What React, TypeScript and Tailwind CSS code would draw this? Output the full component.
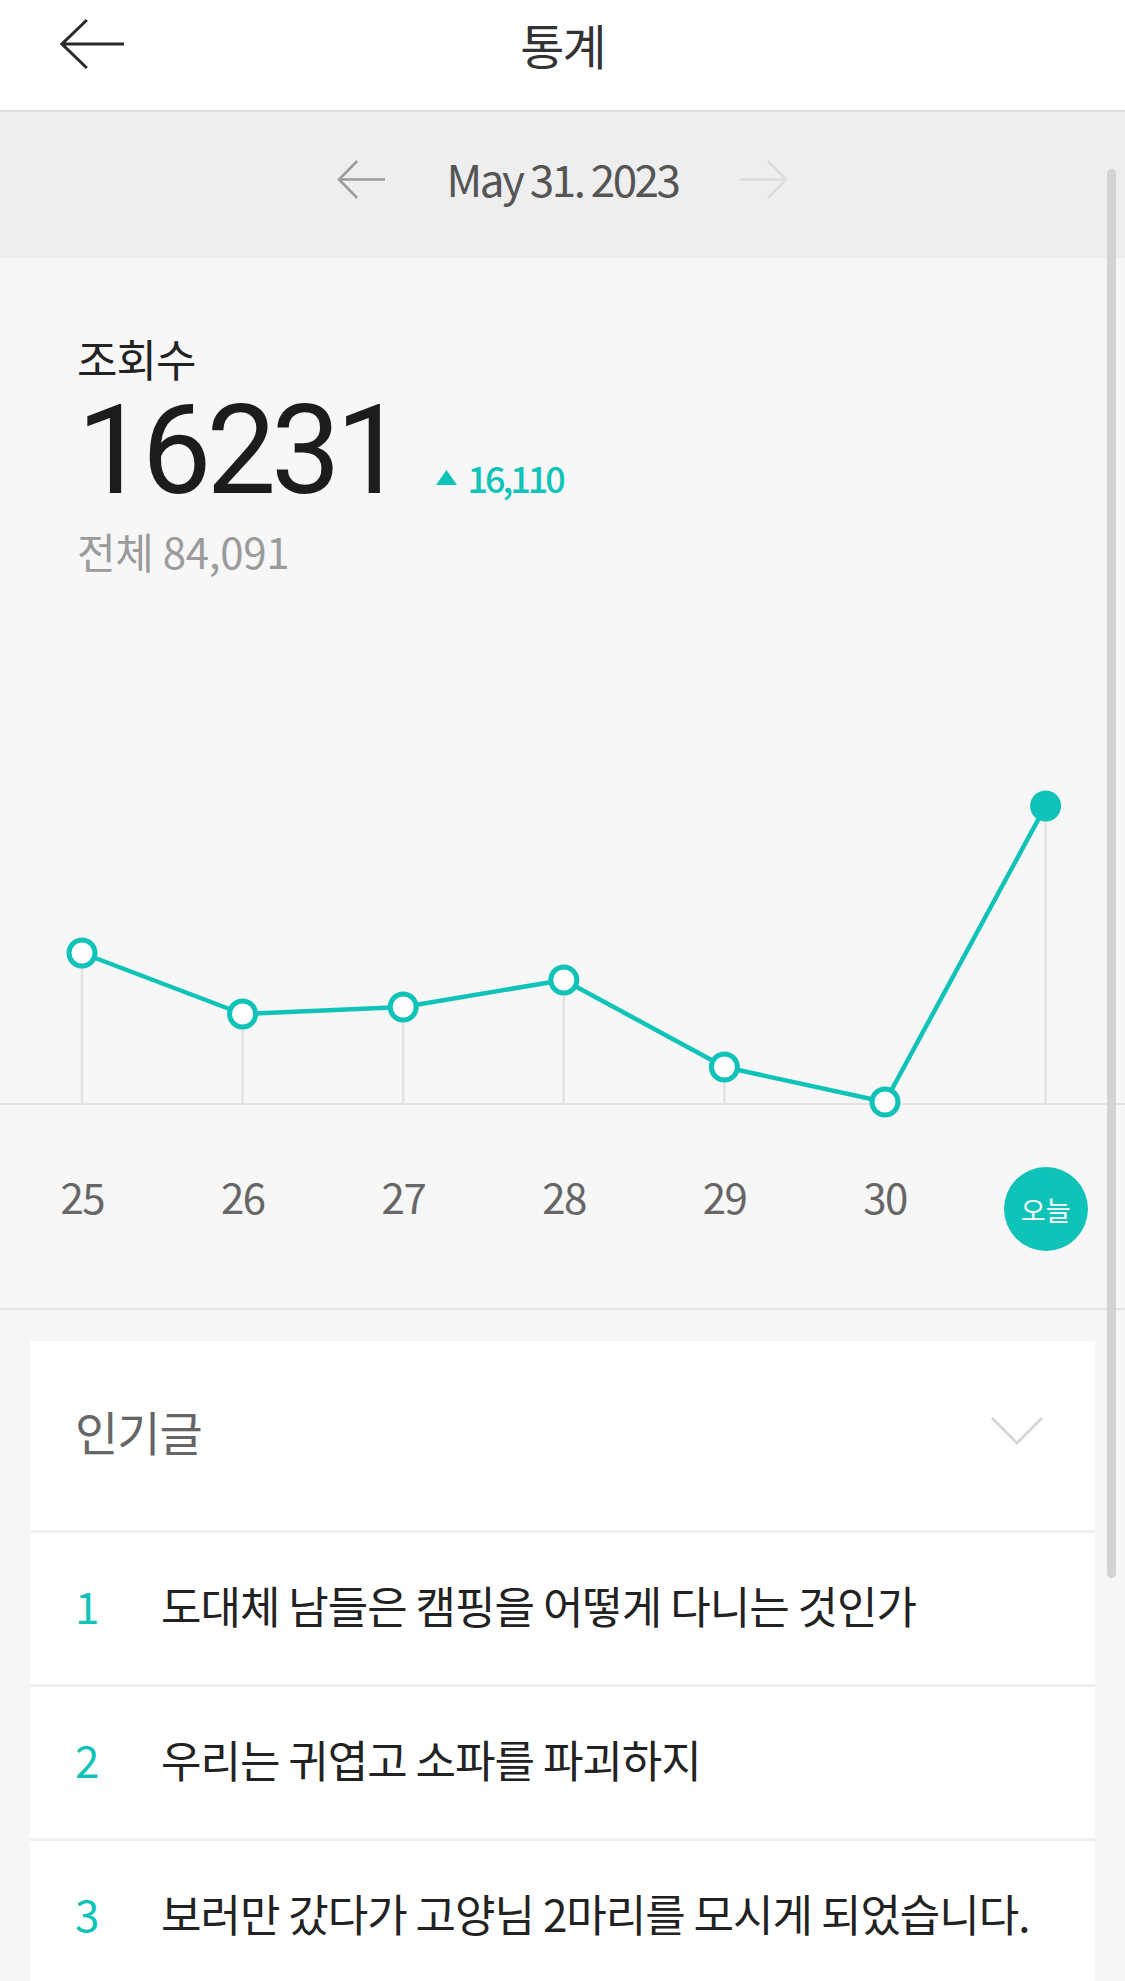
import React from 'react'

// 최근 7일 조회수 — 그래프 좌표(px)는 화면 기준으로 바로 찍는다.
const DAYS = ['25', '26', '27', '28', '29', '30']
const POINT_Y = [953, 1014, 1007, 980, 1067, 1102, 806]
const CHART_TOP = 760
const COL_W = 160.6
const X0 = 82

const POSTS = [
  '도대체 남들은 캠핑을 어떻게 다니는 것인가',
  '우리는 귀엽고 소파를 파괴하지',
  '보러만 갔다가 고양님 2마리를 모시게 되었습니다.',
]

const TEAL = '#10c3b8'
const FONT = { fontFamily: '"Noto Sans CJK KR", "Noto Sans", sans-serif' }

const ArrowLeft = ({ color, w, h, sw }: { color: string; w: number; h: number; sw: number }) => (
  <svg width={w} height={h} viewBox={`0 0 ${w} ${h}`} fill="none">
    <path
      d={`M${w} ${h / 2} H2 M${w * 0.42} 1 L2 ${h / 2} L${w * 0.42} ${h - 1}`}
      stroke={color}
      strokeWidth={sw}
      strokeLinejoin="miter"
    />
  </svg>
)

const Chart = () => {
  const pts = POINT_Y.map((y, i) => [X0 + i * COL_W, y - CHART_TOP] as const)
  const base = 1104 - CHART_TOP
  return (
    <svg width={1125} height={380} viewBox="0 0 1125 380" className="block">
      <line x1={0} x2={1125} y1={base} y2={base} stroke="#e3e3e3" strokeWidth={2} />
      {pts.map(([x, y], i) => (
        <line key={`g${i}`} x1={x} x2={x} y1={y} y2={base} stroke="#e2e2e2" strokeWidth={2.5} />
      ))}
      <polyline
        points={pts.map(([x, y]) => `${x},${y}`).join(' ')}
        fill="none"
        stroke={TEAL}
        strokeWidth={4.5}
        strokeLinejoin="round"
      />
      {pts.slice(0, 6).map(([x, y], i) => (
        <circle key={`c${i}`} cx={x} cy={y} r={13} fill="#fff" stroke={TEAL} strokeWidth={5} />
      ))}
      <circle cx={pts[6][0]} cy={pts[6][1]} r={15.5} fill={TEAL} />
    </svg>
  )
}

export default function App() {
  return (
    <div className="relative h-[1981px] w-[1125px] overflow-hidden bg-[#f6f6f6]" style={FONT}>
      {/* 상단 헤더 */}
      <header className="h-[112px] border-b-2 border-[#dedede] bg-white">
        <div className="grid h-[88px] grid-cols-[1fr_auto_1fr] items-center">
          <div className="pl-[60px]">
            <ArrowLeft color="#2b2b2b" w={64} h={50} sw={3} />
          </div>
          <h1 className="text-[48px] leading-none tracking-[-2px] text-[#333]">통계</h1>
          <div />
        </div>
      </header>

      {/* 날짜 이동 */}
      <div className="flex h-[146px] items-center justify-center gap-[62px] bg-[#eeeeee] pb-[12px]">
        <ArrowLeft color="#9c9c9c" w={48} h={39} sw={2.5} />
        <span className="pb-[2px] text-[44px] leading-none tracking-[-2.5px] text-[#555]">
          May 31. 2023
        </span>
        <div className="rotate-180">
          <ArrowLeft color="#dddddd" w={48} h={39} sw={2.5} />
        </div>
      </div>

      {/* 조회수 통계 */}
      <section className="border-b-2 border-[#e2e2e2] bg-[#f7f7f7]">
        <div className="h-[502px] pl-[77px] pt-[78px]">
          <div className="text-[44px] leading-none tracking-[-1px] text-[#222]">조회수</div>
          <div className="mt-[23px] flex items-end">
            <span
              className="text-[124px] leading-[96px] tracking-[-5px] text-[#1c1c1c]"
              style={{ fontFamily: 'Roboto, sans-serif' }}
            >
              16231
            </span>
            <span className="mb-[4px] ml-[36px] flex items-center gap-[10px]" style={{ color: TEAL }}>
              <svg width={21} height={15} viewBox="0 0 21 15">
                <path d="M10.5 0 L21 15 H0 Z" fill={TEAL} />
              </svg>
              <span className="text-[36px] font-medium leading-none tracking-[-3px]">16,110</span>
            </span>
          </div>
          <div className="mt-[31px] text-[42px] leading-none tracking-[-0.3px] text-[#9b9b9b]">전체 84,091</div>
        </div>

        <Chart />

        <div className="ml-[2px] grid h-[168px] w-[1124px] grid-cols-7 items-start pt-[35px]">
          {DAYS.map((d) => (
            <div key={d} className="text-center text-[42px] leading-none tracking-[-1.5px] text-[#666]">
              {d}
            </div>
          ))}
          <div className="-mt-[8px] flex justify-center">
            <div
              className="flex h-[84px] w-[84px] items-center justify-center rounded-full text-[27px] leading-none text-white"
              style={{ backgroundColor: TEAL }}
            >
              오늘
            </div>
          </div>
        </div>
      </section>

      {/* 인기글 */}
      <div className="mx-[30px] mt-[31px] bg-white">
        <div className="flex h-[189px] items-center justify-between pb-[10px] pl-[45px] pr-[52px]">
          <span className="text-[47px] leading-none tracking-[-1px] text-[#666]">인기글</span>
          <svg width={52} height={28} viewBox="0 0 52 28" fill="none">
            <path d="M1 1 L26 26 L51 1" stroke="#d6d6d6" strokeWidth={3} />
          </svg>
        </div>
        {POSTS.map((p, i) => (
          <div key={p} className="flex h-[154px] items-center border-t-[3px] border-[#efefef] pb-[8px] pl-[45px]">
            <span className="w-[86px] text-[44px] leading-none" style={{ color: TEAL }}>
              {i + 1}
            </span>
            <span className="text-[44px] leading-none tracking-[-1px] text-[#222]">{p}</span>
          </div>
        ))}
      </div>

      {/* 스크롤바 */}
      <div className="absolute left-[1107px] top-[169px] h-[1409px] w-[9px] rounded-full bg-[#d3d3d3]" />
    </div>
  )
}
